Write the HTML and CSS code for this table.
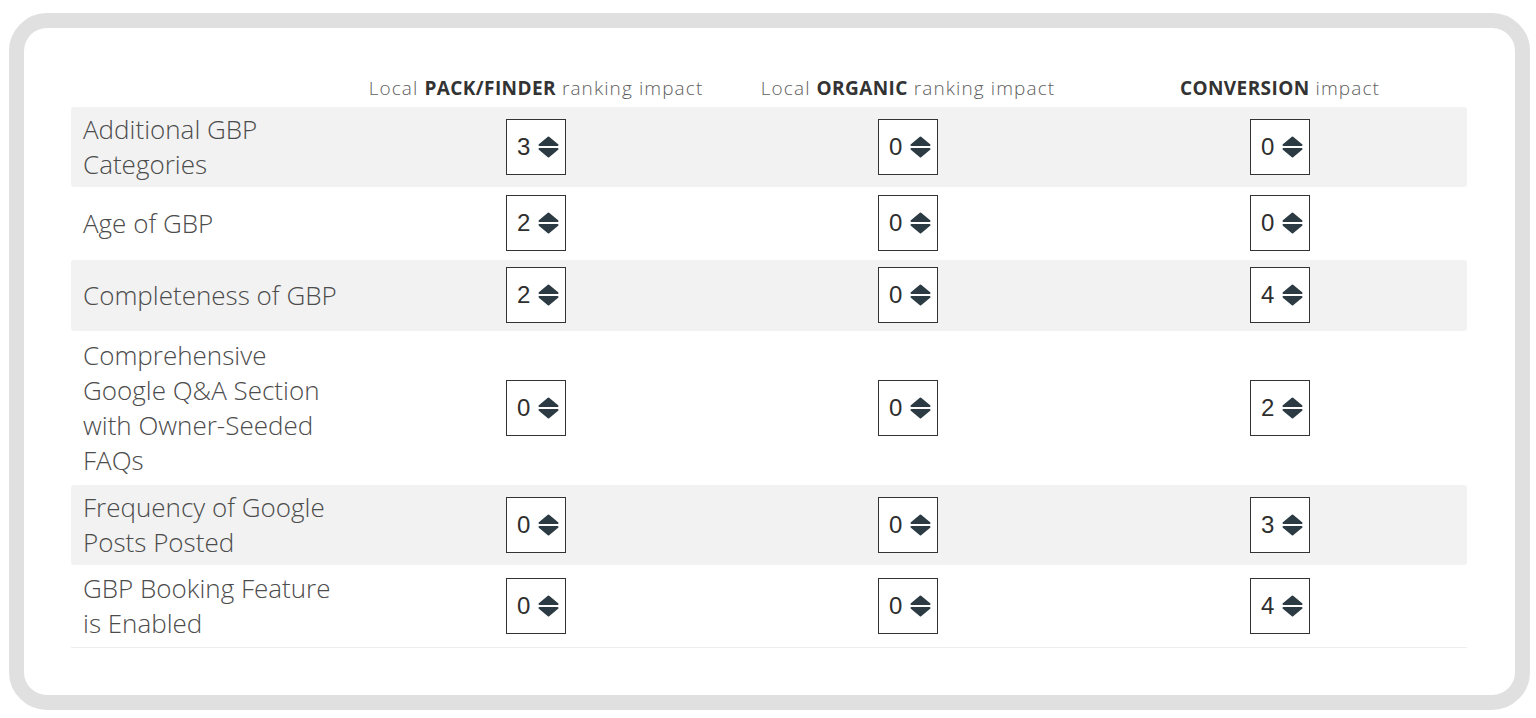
FILE: index.html
```html
<!DOCTYPE html>
<html lang="en">
<head>
<meta charset="utf-8">
<title>GBP ranking factors</title>
<link rel="stylesheet" href="styles.css">
</head>
<body>
<div class="frame">
  <div class="table">
    <div class="head">
      <div class="hcell"></div>
      <div class="hcell">Local <b>PACK/FINDER</b> ranking impact</div>
      <div class="hcell">Local <b>ORGANIC</b> ranking impact</div>
      <div class="hcell"><b>CONVERSION</b> impact</div>
    </div>

    <div class="row shade">
      <div class="label">Additional GBP Categories</div>
      <div class="cell"><div class="spin"><span class="num">3</span><svg class="arr" viewBox="0 0 21 22"><path d="M10.5 1.5 L19.5 9 L1.5 9 Z M1.5 13 L19.5 13 L10.5 20.5 Z"/></svg></div></div>
      <div class="cell"><div class="spin"><span class="num">0</span><svg class="arr" viewBox="0 0 21 22"><path d="M10.5 1.5 L19.5 9 L1.5 9 Z M1.5 13 L19.5 13 L10.5 20.5 Z"/></svg></div></div>
      <div class="cell"><div class="spin"><span class="num">0</span><svg class="arr" viewBox="0 0 21 22"><path d="M10.5 1.5 L19.5 9 L1.5 9 Z M1.5 13 L19.5 13 L10.5 20.5 Z"/></svg></div></div>
    </div>

    <div class="row">
      <div class="label">Age of GBP</div>
      <div class="cell"><div class="spin"><span class="num">2</span><svg class="arr" viewBox="0 0 21 22"><path d="M10.5 1.5 L19.5 9 L1.5 9 Z M1.5 13 L19.5 13 L10.5 20.5 Z"/></svg></div></div>
      <div class="cell"><div class="spin"><span class="num">0</span><svg class="arr" viewBox="0 0 21 22"><path d="M10.5 1.5 L19.5 9 L1.5 9 Z M1.5 13 L19.5 13 L10.5 20.5 Z"/></svg></div></div>
      <div class="cell"><div class="spin"><span class="num">0</span><svg class="arr" viewBox="0 0 21 22"><path d="M10.5 1.5 L19.5 9 L1.5 9 Z M1.5 13 L19.5 13 L10.5 20.5 Z"/></svg></div></div>
    </div>

    <div class="row shade">
      <div class="label">Completeness of GBP</div>
      <div class="cell"><div class="spin"><span class="num">2</span><svg class="arr" viewBox="0 0 21 22"><path d="M10.5 1.5 L19.5 9 L1.5 9 Z M1.5 13 L19.5 13 L10.5 20.5 Z"/></svg></div></div>
      <div class="cell"><div class="spin"><span class="num">0</span><svg class="arr" viewBox="0 0 21 22"><path d="M10.5 1.5 L19.5 9 L1.5 9 Z M1.5 13 L19.5 13 L10.5 20.5 Z"/></svg></div></div>
      <div class="cell"><div class="spin"><span class="num">4</span><svg class="arr" viewBox="0 0 21 22"><path d="M10.5 1.5 L19.5 9 L1.5 9 Z M1.5 13 L19.5 13 L10.5 20.5 Z"/></svg></div></div>
    </div>

    <div class="row tall">
      <div class="label">Comprehensive Google Q&amp;A Section with Owner-Seeded FAQs</div>
      <div class="cell"><div class="spin"><span class="num">0</span><svg class="arr" viewBox="0 0 21 22"><path d="M10.5 1.5 L19.5 9 L1.5 9 Z M1.5 13 L19.5 13 L10.5 20.5 Z"/></svg></div></div>
      <div class="cell"><div class="spin"><span class="num">0</span><svg class="arr" viewBox="0 0 21 22"><path d="M10.5 1.5 L19.5 9 L1.5 9 Z M1.5 13 L19.5 13 L10.5 20.5 Z"/></svg></div></div>
      <div class="cell"><div class="spin"><span class="num">2</span><svg class="arr" viewBox="0 0 21 22"><path d="M10.5 1.5 L19.5 9 L1.5 9 Z M1.5 13 L19.5 13 L10.5 20.5 Z"/></svg></div></div>
    </div>

    <div class="row shade">
      <div class="label">Frequency of Google Posts Posted</div>
      <div class="cell"><div class="spin"><span class="num">0</span><svg class="arr" viewBox="0 0 21 22"><path d="M10.5 1.5 L19.5 9 L1.5 9 Z M1.5 13 L19.5 13 L10.5 20.5 Z"/></svg></div></div>
      <div class="cell"><div class="spin"><span class="num">0</span><svg class="arr" viewBox="0 0 21 22"><path d="M10.5 1.5 L19.5 9 L1.5 9 Z M1.5 13 L19.5 13 L10.5 20.5 Z"/></svg></div></div>
      <div class="cell"><div class="spin"><span class="num">3</span><svg class="arr" viewBox="0 0 21 22"><path d="M10.5 1.5 L19.5 9 L1.5 9 Z M1.5 13 L19.5 13 L10.5 20.5 Z"/></svg></div></div>
    </div>

    <div class="row last">
      <div class="label">GBP Booking Feature is Enabled</div>
      <div class="cell"><div class="spin"><span class="num">0</span><svg class="arr" viewBox="0 0 21 22"><path d="M10.5 1.5 L19.5 9 L1.5 9 Z M1.5 13 L19.5 13 L10.5 20.5 Z"/></svg></div></div>
      <div class="cell"><div class="spin"><span class="num">0</span><svg class="arr" viewBox="0 0 21 22"><path d="M10.5 1.5 L19.5 9 L1.5 9 Z M1.5 13 L19.5 13 L10.5 20.5 Z"/></svg></div></div>
      <div class="cell"><div class="spin"><span class="num">4</span><svg class="arr" viewBox="0 0 21 22"><path d="M10.5 1.5 L19.5 9 L1.5 9 Z M1.5 13 L19.5 13 L10.5 20.5 Z"/></svg></div></div>
    </div>
  </div>
</div>
</body>
</html>
```

FILE: styles.css
```css
html, body {
  margin: 0;
  padding: 0;
  background: #ffffff;
}

body {
  font-family: "Open Sans", "Noto Sans", sans-serif;
  color: #555;
}

.frame {
  box-sizing: border-box;
  width: 1521px;
  height: 697px;
  margin: 13px 0 0 9px;
  border: 15px solid #e0e0e0;
  border-radius: 38px;
  background: #fff;
  padding: 46px 48px 0 47px;
}

.table {
  display: flex;
  flex-direction: column;
  gap: 1px;
}

.head,
.row {
  display: grid;
  grid-template-columns: 279px repeat(3, 372px);
}

.head {
  height: 28px;
  margin-bottom: 4px;
}

.hcell {
  text-align: center;
  font-size: 19px;
  line-height: 28px;
  color: #5e5e5e;
  letter-spacing: 1.1px;
  font-weight: 300;
  white-space: nowrap;
}

.hcell b {
  color: #333;
  font-weight: 700;
  letter-spacing: 0.4px;
}

.row {
  border-radius: 3px;
}

.row.shade {
  background: #f2f2f2;
}

.row.tall .label {
  padding-top: 6px;
  padding-bottom: 6px;
}

.row.last {
  border-bottom: 1px solid #eeeeee;
  border-radius: 0;
  padding-bottom: 1px;
}

.label {
  padding: 5px 12px;
  font-size: 26px;
  font-weight: 300;
  line-height: 35px;
  color: #4c4c4c;
  display: flex;
  align-items: center;
}

.cell {
  display: flex;
  align-items: center;
  justify-content: center;
  padding: 7px 0 8px;
}

.spin {
  box-sizing: border-box;
  width: 60px;
  height: 56px;
  border: 1.5px solid #333;
  background: #fff;
  display: flex;
  align-items: center;
  padding-left: 10px;
  gap: 6px;
}

.num {
  font-family: "Liberation Sans", Arial, sans-serif;
  font-size: 24px;
  color: #2e2e2e;
  line-height: 1;
  width: 15px;
}

.arr {
  width: 21px;
  height: 22px;
  display: block;
}

.arr path {
  fill: #2c3b43;
  stroke: #2c3b43;
  stroke-width: 2;
  stroke-linejoin: round;
}
```
